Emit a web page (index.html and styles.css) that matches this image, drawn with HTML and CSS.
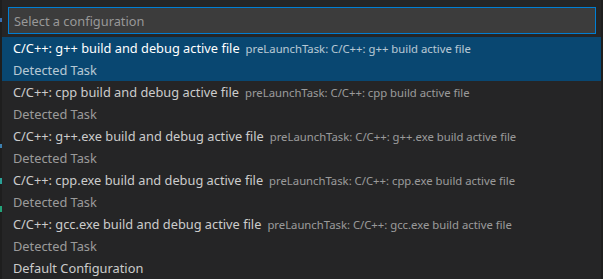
FILE: index.html
```html
<!DOCTYPE html>
<html lang="en">

<head>
    <meta charset="UTF-8">
    <title>Select a configuration</title>
    <link rel="stylesheet" href="styles.css">
</head>

<body>
    <div class="gutter"></div>
    <div class="quick-pick">
        <div class="input-box">
            <input type="text" class="filter" placeholder="Select a configuration">
        </div>
        <ul class="list">
            <li class="item selected">
                <div class="main"><span class="label">C/C++: g++ build and debug active file</span><span class="desc">preLaunchTask: C/C++: g++ build active file</span></div>
                <div class="detail">Detected Task</div>
            </li>
            <li class="item">
                <div class="main"><span class="label">C/C++: cpp build and debug active file</span><span class="desc">preLaunchTask: C/C++: cpp build active file</span></div>
                <div class="detail">Detected Task</div>
            </li>
            <li class="item">
                <div class="main"><span class="label">C/C++: g++.exe build and debug active file</span><span class="desc">preLaunchTask: C/C++: g++.exe build active file</span></div>
                <div class="detail">Detected Task</div>
            </li>
            <li class="item">
                <div class="main"><span class="label">C/C++: cpp.exe build and debug active file</span><span class="desc">preLaunchTask: C/C++: cpp.exe build active file</span></div>
                <div class="detail">Detected Task</div>
            </li>
            <li class="item">
                <div class="main"><span class="label">C/C++: gcc.exe build and debug active file</span><span class="desc">preLaunchTask: C/C++: gcc.exe build active file</span></div>
                <div class="detail">Detected Task</div>
            </li>
            <li class="item single">
                <div class="main"><span class="label">Default Configuration</span></div>
            </li>
        </ul>
    </div>
</body>

</html>
```

FILE: styles.css
```css
html,
body {
    margin: 0;
    height: 100%;
    overflow: hidden;
}

body {
    display: flex;
    background-color: #1e1e1e;
    font-family: 'Noto Sans', 'Open Sans', sans-serif;
    font-size: 12.8px;
    color: #cccccc;
}

/* editor bits peeking out behind the widget */
.gutter {
    width: 2px;
    flex-shrink: 0;
    background: linear-gradient(#1e1e1e 0 18px, #3a6fb0 18px 22px, #1e1e1e 22px 144px,
            #3c7fb0 144px 148px, #1e1e1e 148px 178px, #2aa198 178px 184px,
            #1e1e1e 184px 206px, #23a37a 206px 212px, #1e1e1e 212px);
}

.quick-pick {
    width: 599px;
    background-color: #252526;
}

.input-box {
    padding: 7px 5px 3px 6px;
}

.filter {
    display: block;
    width: 100%;
    height: 27px;
    box-sizing: border-box;
    margin: 0;
    padding: 0 5px;
    border: 1px solid #007fd4;
    background-color: #3c3c3c;
    color: #cccccc;
    font-family: inherit;
    font-size: 12.8px;
    outline: none;
}

.filter::placeholder {
    color: #989898;
}

.list {
    list-style: none;
    margin: 0;
    padding: 0;
}

.item {
    height: 44px;
    padding-left: 11px;
    white-space: nowrap;
}

.item.single {
    height: 22px;
}

.main,
.detail {
    height: 22px;
    line-height: 23px;
}

.desc {
    margin-left: 6px;
    font-size: 11.3px;
    opacity: 0.7;
}

.detail {
    opacity: 0.7;
}

.selected {
    background-color: #094771;
    color: #ffffff;
}
```
